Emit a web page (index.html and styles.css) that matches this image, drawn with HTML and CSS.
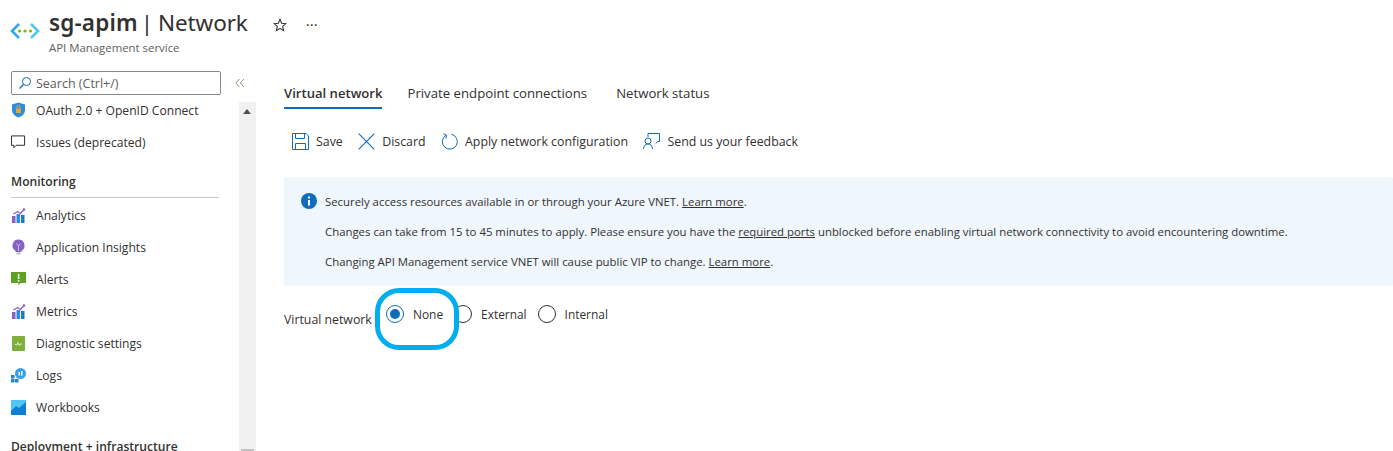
FILE: index.html
```html
<!DOCTYPE html>
<html lang="en">
<head>
<meta charset="utf-8">
<title>sg-apim | Network</title>
<link rel="stylesheet" href="styles.css">
</head>
<body>
<header class="header">
  <svg class="logo" width="30" height="18" viewBox="0 0 30 18"><path d="M9 2 2 9l7 7" fill="none" stroke="#32a9ec" stroke-width="2.6"/><path d="M21 2l7 7-7 7" fill="none" stroke="#50c6f4" stroke-width="2.6"/><circle cx="9.500" cy="9" r="1.600" fill="#7fba00"/><circle cx="15" cy="9" r="1.600" fill="#7fba00"/><circle cx="20.500" cy="9" r="1.600" fill="#7fba00"/></svg>
  <div class="titles">
    <h1 class="title"><b>sg-apim</b><span class="sep">|</span>Network</h1>
    <div class="subtitle">API Management service</div>
  </div>
  <svg class="star" width="14" height="14" viewBox="0 0 14 14"><path d="M7 1.300 8.700 5.200l4.200.4-3.200 2.800.9 4.200L7 10.400l-3.600 2.200.9-4.200L1.100 5.600l4.200-.4z" fill="none" stroke="#333" stroke-width="1.100"/></svg>
  <span class="more">···</span>
</header>
<div class="layout">
  <aside class="side">
    <div class="side-top">
      <div class="search">
        <svg width="14" height="14" viewBox="0 0 14 14"><circle cx="8.500" cy="5.500" r="4" fill="none" stroke="#0f6cbd" stroke-width="1"/><path d="M5.500 8.500 1.500 12.500" stroke="#0f6cbd" stroke-width="1.200"/></svg>
        <span>Search (Ctrl+/)</span>
      </div>
      <svg class="collapse" width="10" height="10" viewBox="0 0 10 10"><path d="M4.500 1 .8 5l3.700 4M9 1 5.300 5 9 9" fill="none" stroke="#8a9a7a" stroke-width="1"/></svg>
    </div>
    <div class="side-body">
      <nav class="menu">
        <div class="item first">
          <svg class="ico" width="14" height="16" viewBox="0 0 14 16"><path d="M7 .5 13.500 2.500V8c0 4-3.500 6.500-6.500 7.500C4 14.500.5 12 .5 8V2.500z" fill="#2f8bdc"/><rect x="4.500" y="6.500" width="5" height="4.500" fill="#e8a33a"/><path d="M5.500 6.500V5a1.500 1.500 0 0 1 3 0v1.500" fill="none" stroke="#e8a33a"/></svg>
          <span>OAuth 2.0 + OpenID Connect</span>
        </div>
        <div class="item">
          <svg class="ico" width="16" height="14" viewBox="0 0 16 14"><path d="M.5.500h14v10H5.500L3 13v-2.500H.5z" fill="none" stroke="#222" stroke-width="1"/></svg>
          <span>Issues (deprecated)</span>
        </div>
        <div class="group">Monitoring</div>
        <div class="item">
          <svg class="ico" width="15" height="15" viewBox="0 0 15 15"><rect x="1" y="8" width="3.500" height="7" fill="#8661c5"/><rect x="5.500" y="6" width="3.500" height="9" fill="#2f8bdc"/><rect x="10" y="7" width="3.500" height="8" fill="#1f77c9"/><path d="M2.500 6 6.500 3.500l3 2 3.500-4" fill="none" stroke="#8661c5" stroke-width="1.300"/><circle cx="13" cy="1.500" r="1.200" fill="#8661c5"/></svg>
          <span>Analytics</span>
        </div>
        <div class="item">
          <svg class="ico" width="15" height="16" viewBox="0 0 15 16"><path d="M7.500 .5a6 6 0 0 1 3 11.200V13h-6v-1.300a6 6 0 0 1 3-11.200z" fill="#8661c5"/><path d="M5.500 4.500 7.500 7l2-2.500M7.500 7v5" fill="none" stroke="#d9c8f2" stroke-width=".8"/><rect x="5.500" y="13.500" width="4" height="2" fill="#bbb"/></svg>
          <span>Application Insights</span>
        </div>
        <div class="item">
          <svg class="ico" width="15" height="14" viewBox="0 0 15 14"><path d="M0 0h15v11H9.500l-2 2.500V11H0z" fill="#5ea320"/><rect x="6.800" y="2" width="1.600" height="5" fill="#fff"/><rect x="6.800" y="8" width="1.600" height="1.600" fill="#fff"/></svg>
          <span>Alerts</span>
        </div>
        <div class="item">
          <svg class="ico" width="15" height="15" viewBox="0 0 15 15"><rect x="1" y="8" width="3.500" height="7" fill="#8661c5"/><rect x="5.500" y="6" width="3.500" height="9" fill="#2f8bdc"/><rect x="10" y="7" width="3.500" height="8" fill="#1f77c9"/><path d="M2.500 6 6.500 3.500l3 2 3.500-4" fill="none" stroke="#8661c5" stroke-width="1.300"/><circle cx="13" cy="1.500" r="1.200" fill="#8661c5"/></svg>
          <span>Metrics</span>
        </div>
        <div class="item">
          <svg class="ico" width="15" height="15" viewBox="0 0 15 15"><rect x="1" width="13" height="15" rx="1" fill="#7fb03a"/><path d="M4 8.500h2l1-2 1 3 1-1.500h2" fill="none" stroke="#fff" stroke-width=".7"/></svg>
          <span>Diagnostic settings</span>
        </div>
        <div class="item">
          <svg class="ico" width="15" height="15" viewBox="0 0 15 15"><circle cx="9.500" cy="5.500" r="5.500" fill="#35a2e8"/><rect x="7.500" y="4" width="1.500" height="3.500" fill="#fff"/><rect x="10" y="3" width="1.500" height="4.500" fill="#fff"/><rect x="0" y="7" width="3.500" height="3.500" fill="#2a83d0"/><rect x="0" y="11" width="3.500" height="3.500" fill="#2a83d0"/><rect x="4" y="11" width="3.500" height="3.500" fill="#2a83d0"/></svg>
          <span>Logs</span>
        </div>
        <div class="item">
          <svg class="ico" width="15" height="15" viewBox="0 0 15 15"><rect width="15" height="15" fill="#50c6f4"/><path d="M0 11 5 6l3 2 7-6v13H0z" fill="#0f7fd4"/></svg>
          <span>Workbooks</span>
        </div>
        <div class="group last">Deployment + infrastructure</div>
      </nav>
      <div class="scrollbar">
        <span class="arrow"></span>
        <span class="thumb"></span>
      </div>
    </div>
  </aside>
  <main class="main">
    <div class="tabs">
      <span class="tab active">Virtual network</span>
      <span class="tab">Private endpoint connections</span>
      <span class="tab wide">Network status</span>
    </div>
    <div class="toolbar">
      <span class="btn"><svg width="17" height="17" viewBox="0 0 17 17"><path d="M.5.500h13.500l2.500 2.500v13.500H.5z" fill="none" stroke="#0f6cbd"/><path d="M3.500.5v5h9v-5M3.500 16.500v-6h10v6" fill="none" stroke="#0f6cbd"/></svg>Save</span>
      <span class="btn"><svg width="17" height="17" viewBox="0 0 17 17"><path d="M.7.700l15.600 15.600M16.300.700.700 16.300" fill="none" stroke="#0f6cbd" stroke-width="1.100"/></svg>Discard</span>
      <span class="btn"><svg width="17" height="17" viewBox="0 0 17 17"><path d="M5 2.200A7.500 7.500 0 1 0 10.500 1.300" fill="none" stroke="#0f6cbd"/><path d="M2.500 .5 5.500 2.200 5 5.500" fill="none" stroke="#0f6cbd"/></svg>Apply network configuration</span>
      <span class="btn"><svg width="17" height="17" viewBox="0 0 17 17"><path d="M5 4V.5h11.500v8h-2L13 10.500" fill="none" stroke="#0f6cbd"/><circle cx="5" cy="8" r="3" fill="none" stroke="#0f6cbd"/><path d="M.5 16c0-3 2-5 4.500-5s4.500 2 4.500 5" fill="none" stroke="#0f6cbd"/></svg>Send us your feedback</span>
    </div>
    <section class="info">
      <svg class="info-ico" width="16" height="16" viewBox="0 0 16 16"><circle cx="8" cy="8" r="8" fill="#0f6cbd"/><rect x="7" y="7" width="2" height="5.500" fill="#fff"/><rect x="7" y="3.500" width="2" height="2" fill="#fff"/></svg>
      <div class="info-text">
        <p>Securely access resources available in or through your Azure VNET. <a href="#">Learn more</a>.</p>
        <p>Changes can take from 15 to 45 minutes to apply. Please ensure you have the <a href="#">required ports</a> unblocked before enabling virtual network connectivity to avoid encountering downtime.</p>
        <p>Changing API Management service VNET will cause public VIP to change. <a href="#">Learn more</a>.</p>
      </div>
    </section>
    <div class="field">
      <span class="field-label">Virtual network</span>
      <div class="radios">
        <span class="radio-row"><span class="radio on"></span>None</span>
        <span class="radio-row"><span class="radio"></span>External</span>
        <span class="radio-row"><span class="radio"></span>Internal</span>
      </div>
      <span class="highlight"></span>
    </div>
  </main>
</div>
</body>
</html>
```
FILE: styles.css
```css
* { box-sizing: border-box; }
html, body { margin: 0; height: 451px; overflow: hidden; background: #fff; }
body { font-family: "Open Sans", "Noto Sans", sans-serif; font-size: 12.100px; color: #323130; }
.header { height: 70px; display: flex; align-items: flex-start; padding: 6px 0 0 10px; }
.logo { margin: 16px 9px 0 0; }
.title { margin: 0; font-size: 22.500px; line-height: 34px; font-weight: 400; font-family: "Noto Sans", sans-serif; letter-spacing: -.1px; }
.title b { font-weight: 600; letter-spacing: .15px; }
.sep { margin: 0 5px 0 3px; }
.subtitle { font-size: 11.400px; line-height: 15px; color: #605e5c; }
.star { margin: 12px 0 0 25px; }
.more { margin: 8px 0 0 19px; font-size: 15px; }
.layout { display: flex; height: 381px; }
.side { width: 256px; flex: none; display: flex; flex-direction: column; }
.side-top { height: 32px; display: flex; align-items: flex-start; padding-left: 11px; }
.search { width: 210px; height: 24px; margin-top: 1px; border: 1px solid #8a8886; border-radius: 2px; display: flex; align-items: center; gap: 4px; padding-left: 6px; color: #605e5c; font-size: 12.500px; }
.collapse { margin: 8px 0 0 14px; }
.side-body { flex: 1; display: flex; min-height: 0; }
.menu { width: 239px; overflow: hidden; padding-left: 11px; }
.item { height: 32px; display: flex; align-items: center; }
.item.first { height: 16px; margin-bottom: 8px; }
.ico { flex: none; margin-right: 10px; width: 15px; }
.group { height: 40px; margin: 0 20px 1px 0; padding-top: 15px; font-weight: 600; border-bottom: 1px solid #c8c6c4; line-height: 17px; }
.group.last { border: 0; height: 60px; margin-bottom: 0; }
.scrollbar { width: 17px; background: #f1f1f1; position: relative; }
.arrow { position: absolute; top: 7px; left: 4px; border: 4px solid transparent; border-top: 0; border-bottom: 5px solid #505050; }
.thumb { position: absolute; left: 2px; right: 2px; bottom: 0; height: 2px; background: #c1c1c1; }
.main { flex: 1; min-width: 0; padding: 1px 0 0 28px; }
.tabs { display: flex; gap: 25px; height: 38px; font-size: 13.200px; }
.tab { padding-top: 13px; height: 38px; }
.tab.active { font-weight: 600; font-size: 13.100px; border-bottom: 2px solid #0f6cbd; }
.tab.wide { margin-left: 4px; }
.toolbar { display: flex; align-items: center; gap: 15.500px; height: 40px; margin: 12px 0 0 8px; font-size: 12.350px; }
.btn { display: flex; align-items: center; gap: 7px; }
.info { margin-top: 16px; height: 109px; background: #eff6fc; display: flex; padding: 17px 0 0 17px; border-radius: 2px; }
.info-ico { flex: none; margin: -1px 8px 0 0; }
.info-text { font-size: 11.380px; white-space: nowrap; }
.info-text p { margin: 0 0 15px; line-height: 15px; }
.info-text a { color: #323130; text-decoration: underline; }
.field { position: relative; display: flex; padding-top: 17px; font-size: 12.300px; }
.field-label { margin-top: 8px; width: 102px; }
.radios { display: flex; gap: 11px; padding-top: 1px; font-size: 11.900px; }
.radio-row { display: flex; align-items: center; gap: 9px; height: 20px; }
.radio { width: 18px; height: 18px; border: 1px solid #323130; border-radius: 50%; position: relative; }
.radio.on { border-color: #0f6cbd; }
.radio.on::after { content: ""; position: absolute; inset: 3px; background: #0f6cbd; border-radius: 50%; }
.highlight { position: absolute; left: 91px; top: 2px; width: 84px; height: 62px; border: 5px solid #00aeef; border-radius: 24px; }
```
